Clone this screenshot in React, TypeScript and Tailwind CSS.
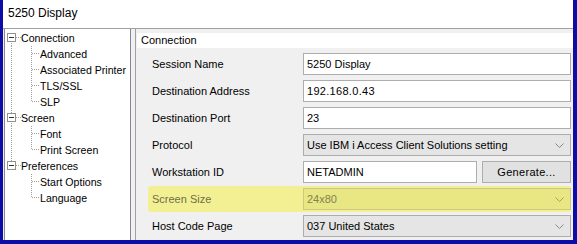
import React from "react"

const font = { fontFamily: '"Liberation Sans", Arial, sans-serif' }

type RootProps = { label: string; first?: boolean; last?: boolean }

function RootRow({ label, first, last }: RootProps) {
  return (
    <div className="flex h-4 items-center">
      <svg width="16" height="16" className="shrink-0">
        {!first && <line x1="6.5" y1="0" x2="6.5" y2="3" stroke="#a0a0a0" strokeDasharray="1 1" />}
        {!last && <line x1="6.5" y1="13" x2="6.5" y2="16" stroke="#a0a0a0" strokeDasharray="1 1" />}
        <rect x="2.5" y="3.5" width="8" height="8" fill="#fff" stroke="#919191" />
        <line x1="4" y1="7.5" x2="9" y2="7.5" stroke="#333" />
        <line x1="11" y1="7.5" x2="16" y2="7.5" stroke="#a0a0a0" strokeDasharray="1 1" />
      </svg>
      <span className="leading-none">{label}</span>
    </div>
  )
}

type ChildProps = { label: string; last?: boolean; rootLine?: boolean }

function ChildRow({ label, last, rootLine }: ChildProps) {
  return (
    <div className="flex h-4 items-center">
      <svg width="35" height="16" className="shrink-0">
        {rootLine && <line x1="6.5" y1="0" x2="6.5" y2="16" stroke="#a0a0a0" strokeDasharray="1 1" />}
        <line x1="26.5" y1="0" x2="26.5" y2={last ? 8 : 16} stroke="#a0a0a0" strokeDasharray="1 1" />
        <line x1="27" y1="7.5" x2="35" y2="7.5" stroke="#a0a0a0" strokeDasharray="1 1" />
      </svg>
      <span className="whitespace-nowrap leading-none">{label}</span>
    </div>
  )
}

function Chevron({ color = "#888" }: { color?: string }) {
  return (
    <svg width="9" height="5" viewBox="0 0 9 5" className="shrink-0">
      <path d="M0.5 0.5 L4.5 4.5 L8.5 0.5" fill="none" stroke={color} strokeWidth="1" />
    </svg>
  )
}

function Row({ label, children }: { label: string; children: React.ReactNode }) {
  return (
    <div className="flex h-[22px] items-center pl-[16px]">
      <div className="w-[151px] shrink-0">{label}</div>
      {children}
    </div>
  )
}

function TextBox({ value, className = "" }: { value: string; className?: string }) {
  return (
    <div className={`flex h-[22px] items-center border border-[#adadad] bg-white pl-[3px] ${className}`}>
      {value}
    </div>
  )
}

function Select({ value }: { value: string }) {
  return (
    <div className="flex h-[22px] w-[268px] items-center justify-between border border-[#adadad] bg-[#e5e5e5] pl-[3px] pr-[6px]">
      <span>{value}</span>
      <Chevron />
    </div>
  )
}

export default function App() {
  return (
    <div
      className="flex h-[244px] w-[577px] flex-col overflow-hidden border-b-[4px] border-l-[3px] border-r-[4px] border-[#0c0ca6] bg-[#f0f0f0] text-[11px] text-black"
      style={font}
    >
      <div className="flex h-[29px] shrink-0 items-center border-b border-[#a0a0a0] bg-white pb-[2px] pl-[5px] text-[12px]">
        5250 Display
      </div>

      <div className="flex min-h-0 flex-1 pl-[1px]">
        <div className="w-[127px] shrink-0 overflow-hidden border-x border-[#828790] bg-white pt-[1px] text-[10.6px]">
          <RootRow label="Connection" first />
          <ChildRow label="Advanced" rootLine />
          <ChildRow label="Associated Printer" rootLine />
          <ChildRow label="TLS/SSL" rootLine />
          <ChildRow label="SLP" rootLine last />
          <RootRow label="Screen" />
          <ChildRow label="Font" rootLine />
          <ChildRow label="Print Screen" rootLine last />
          <RootRow label="Preferences" last />
          <ChildRow label="Start Options" />
          <ChildRow label="Language" last />
        </div>

        <div className="ml-[4px] flex flex-1 flex-col border-l border-[#a0a0a0] pt-[4px]">
          <div className="ml-[1px] flex h-[15px] items-center bg-white pl-[4px]">Connection</div>

          <div className="mt-[5px] flex flex-col gap-[5px] pr-[3px]">
            <Row label="Session Name">
              <TextBox value="5250 Display" className="w-[268px]" />
            </Row>
            <Row label="Destination Address">
              <TextBox value="192.168.0.43" className="w-[268px] tracking-[0.3px]" />
            </Row>
            <Row label="Destination Port">
              <TextBox value="23" className="w-[268px]" />
            </Row>
            <Row label="Protocol">
              <Select value="Use IBM i Access Client Solutions setting" />
            </Row>
            <Row label="Workstation ID">
              <TextBox value="NETADMIN" className="w-[174px]" />
              <div className="ml-[5px] flex h-[22px] w-[89px] items-center justify-center border border-[#adadad] bg-[#e1e1e1] tracking-[0.3px]">
                Generate...
              </div>
            </Row>

            <div className="-my-[2px] ml-[12px] flex h-[26px] items-center rounded-[3px] bg-[#f3f094] pl-[4px] text-[#6f6e46]">
              <div className="w-[151px] shrink-0">Screen Size</div>
              <div className="flex h-[22px] w-[268px] items-center justify-between border border-[#cdc983] bg-[#e9e684] pl-[3px] pr-[6px] text-[#838255]">
                <span>24x80</span>
                <Chevron color="#a8a35c" />
              </div>
            </div>

            <Row label="Host Code Page">
              <Select value="037 United States" />
            </Row>
          </div>
        </div>
      </div>
    </div>
  )
}
